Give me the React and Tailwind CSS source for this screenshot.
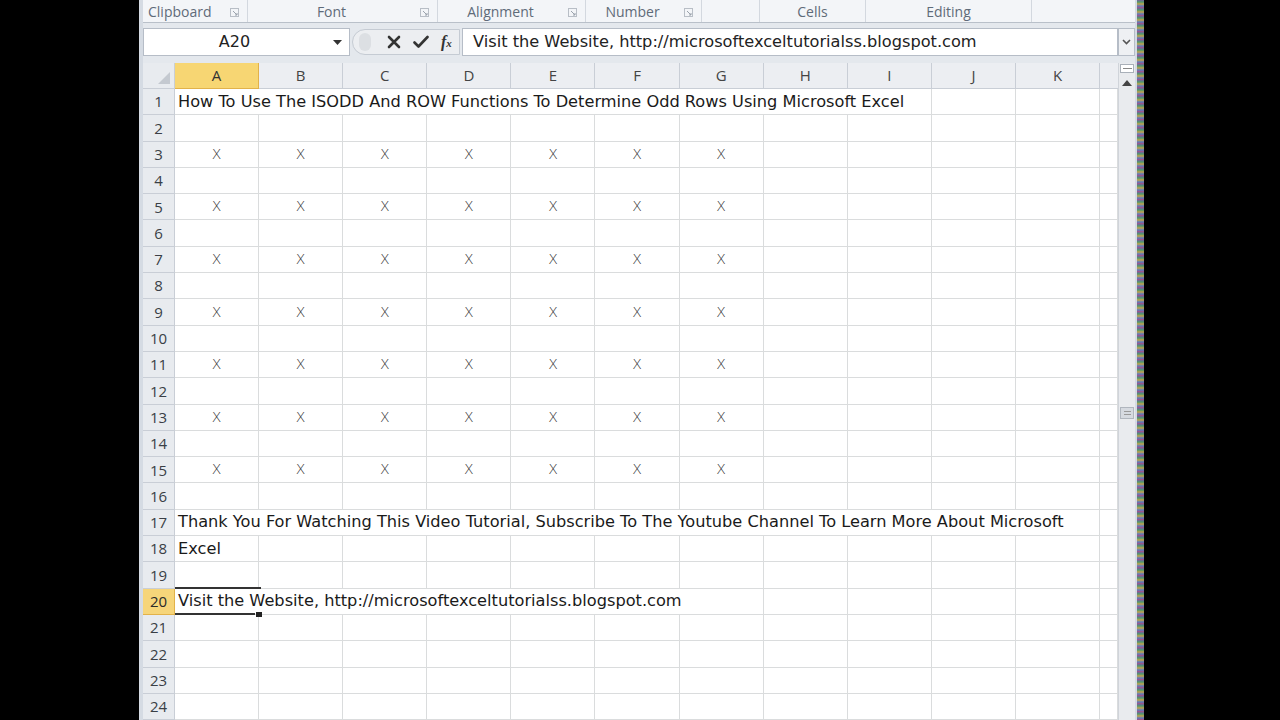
import React from "react";

const cols = ["A", "B", "C", "D", "E", "F", "G", "H", "I", "J", "K"];
const gridCols = "grid grid-cols-[32px_repeat(11,84.1px)_18px]";
const cellBorder = "border-r border-b border-[#dadcdd]";
const cellFont = { fontFamily: '"DejaVu Sans", sans-serif' };

function Cell({ children, span = 1, center }) {
  const spanClass =
    span === 7 ? "col-span-7" : span === 9 ? "col-span-9" : span === 11 ? "col-span-11" : "";
  return (
    <div
      className={`${spanClass} ${cellBorder} h-[26.3px] flex items-center ${
        center ? "justify-center" : "pl-[3px]"
      } whitespace-nowrap overflow-hidden text-[16.2px] text-[#1a1a1a]`}
      style={cellFont}
    >
      {children}
    </div>
  );
}

function RowHead({ n, active }) {
  return (
    <div
      className={`h-[26.3px] flex items-center justify-center border-r border-b text-[15px] ${
        active
          ? "bg-[#f6d57a] border-[#e2b24a] text-[#2a2a2a]"
          : "bg-[#e8ebef] border-[#c9ced6] text-[#3a3f46]"
      }`}
    >
      {n}
    </div>
  );
}

function Row({ n }) {
  const odd = n >= 3 && n <= 15 && n % 2 === 1;
  let content;
  if (n === 1) {
    content = (
      <>
        <Cell span={9}>How To Use The ISODD And ROW Functions To Determine Odd Rows Using Microsoft Excel</Cell>
        <Cell />
        <Cell />
      </>
    );
  } else if (n === 17) {
    content = (
      <Cell span={11}>
        Thank You For Watching This Video Tutorial, Subscribe To The Youtube Channel To Learn More About Microsoft
      </Cell>
    );
  } else if (n === 20) {
    content = (
      <>
        <div
          className={`col-span-7 ${cellBorder} h-[26.3px] relative flex items-center pl-[3px] whitespace-nowrap text-[16.2px] text-[#1a1a1a]`}
          style={cellFont}
        >
          Visit the Website, http://microsoftexceltutorialss.blogspot.com
          <div className="absolute left-0 top-[-2px] w-[86px] h-[2px] bg-[#333]" />
          <div className="absolute left-0 bottom-[-1px] w-[80px] h-[2px] bg-[#333]" />
          <div className="absolute left-[81px] bottom-[-3px] w-[6px] h-[5px] bg-[#222]" />
        </div>
        <Cell />
        <Cell />
        <Cell />
        <Cell />
      </>
    );
  } else if (n === 18) {
    content = cols.map((c, i) => <Cell key={c}>{i === 0 ? "Excel" : null}</Cell>);
  } else {
    content = cols.map((c, i) => (
      <Cell key={c} center={odd && i < 7}>
        {odd && i < 7 ? <span className="font-light text-[14px] text-[#333]">X</span> : null}
      </Cell>
    ));
  }
  return (
    <div className={gridCols}>
      <RowHead n={n} active={n === 20} />
      {content}
      <div className={`${cellBorder} h-[26.3px]`} />
    </div>
  );
}

function Launcher() {
  return (
    <svg width="9" height="9" viewBox="0 0 9 9" className="absolute right-[8px] top-[8px]">
      <rect x="0.5" y="0.5" width="8" height="8" fill="none" stroke="#b8bec6" />
      <path d="M3 3 L7 7 M5 7 H7 V5" stroke="#9aa2ac" fill="none" />
    </svg>
  );
}

function GroupLabel({ w, label, launcher }) {
  return (
    <div className={`${w} h-full flex items-center border-r border-[#d3d8df] relative`}>
      <span className={`flex-1 text-center text-[14px] text-[#5f6b79] ${launcher ? "pr-[22px]" : ""}`}>
        {label}
      </span>
      {launcher && <Launcher />}
    </div>
  );
}

export default function App() {
  return (
    <div
      className="w-[1280px] h-[720px] bg-black flex overflow-hidden"
      style={{ fontFamily: '"Open Sans", "Liberation Sans", sans-serif' }}
    >
      <div className="w-[139px] shrink-0" />
      <div className="w-[998px] shrink-0 flex flex-col bg-[#e4e8ed] border-l-[4px] border-r-[2px] border-[#d5dbe3]">
        {/* ribbon group labels */}
        <div className="h-[23px] shrink-0 flex bg-[#f3f5f8] border-b border-[#b9c0c9]">
          <div className="w-[105px] h-full flex items-center border-r border-[#d3d8df] relative">
            <span className="pl-[5px] text-[14px] text-[#5f6b79]">Clipboard</span>
            <Launcher />
          </div>
          <GroupLabel w="w-[190px]" label="Font" launcher />
          <GroupLabel w="w-[148px]" label="Alignment" launcher />
          <GroupLabel w="w-[116px]" label="Number" launcher />
          <div className="w-[58px] h-full border-r border-[#d3d8df]" />
          <GroupLabel w="w-[106px]" label="Cells" />
          <GroupLabel w="w-[166px]" label="Editing" />
          <div className="flex-1" />
        </div>
        {/* formula bar */}
        <div className="h-[34px] shrink-0 flex items-end pb-[1px] bg-[#e4e8ed]">
          <div className="h-[28px] w-[207px] bg-white border border-[#b6bdc7] flex items-center relative">
            <span className="flex-1 text-center text-[16px] text-[#222] pr-[24px]" style={cellFont}>
              A20
            </span>
            <svg width="9" height="6" viewBox="0 0 9 6" className="absolute right-[7px] top-[11px]">
              <path d="M0 0 H9 L4.5 5 Z" fill="#333" />
            </svg>
          </div>
          <div className="h-[28px] w-[112px] flex items-center relative">
            <div className="ml-[2px] h-[26px] w-[108px] rounded-l-[13px] bg-[#eceef1] border border-[#c5cbd3] flex items-center">
              <div className="ml-[6px] w-[12px] h-[18px] rounded-full bg-[#dcdfe3]" />
              <svg width="14" height="14" viewBox="0 0 14 14" className="ml-[16px]">
                <path d="M2 2 L12 12 M12 2 L2 12" stroke="#333" strokeWidth="2.6" strokeLinecap="round" />
              </svg>
              <svg width="16" height="14" viewBox="0 0 16 14" className="ml-[12px]">
                <path
                  d="M1.5 7.5 L5.5 11.5 L14.5 2"
                  stroke="#333"
                  strokeWidth="2.6"
                  fill="none"
                  strokeLinecap="round"
                  strokeLinejoin="round"
                />
              </svg>
              <span
                className="ml-[12px] text-[16px] italic font-semibold text-[#333]"
                style={{ fontFamily: '"Liberation Serif", serif' }}
              >
                f<span className="text-[11px]">x</span>
              </span>
            </div>
          </div>
          <div
            className="h-[28px] flex-1 bg-white border border-[#b6bdc7] flex items-center pl-[10px] text-[16.2px] text-[#222]"
            style={cellFont}
          >
            Visit the Website, http://microsoftexceltutorialss.blogspot.com
          </div>
          <div className="h-[28px] w-[17px] bg-[#eef0f3] border border-[#b6bdc7] flex items-center justify-center">
            <svg width="9" height="6" viewBox="0 0 9 6">
              <path d="M1 1 L4.5 4.5 L8 1" stroke="#555" strokeWidth="1.6" fill="none" />
            </svg>
          </div>
        </div>
        <div className="h-[6px] shrink-0 bg-[#e4e8ed]" />
        {/* sheet */}
        <div className="flex flex-1 bg-white">
          <div className="flex flex-col">
            <div className={gridCols}>
              <div className="h-[26px] bg-[#e8ebef] border-r border-b border-[#c9ced6] relative">
                <svg width="12" height="12" viewBox="0 0 12 12" className="absolute right-[4px] bottom-[4px]">
                  <path d="M12 0 L12 12 L0 12 Z" fill="#c4c9d0" />
                </svg>
              </div>
              {cols.map((c) => (
                <div
                  key={c}
                  className={`h-[26px] flex items-center justify-center border-r border-b text-[15px] ${
                    c === "A"
                      ? "bg-[#f7d673] border-[#e2b24a] text-[#333]"
                      : "bg-[#eceef2] border-[#c9ced6] text-[#444]"
                  }`}
                >
                  {c}
                </div>
              ))}
              <div className="h-[26px] bg-[#eceef2] border-b border-[#c9ced6]" />
            </div>
            {Array.from({ length: 24 }, (_, i) => (
              <Row key={i} n={i + 1} />
            ))}
          </div>
          {/* vertical scrollbar */}
          <div className="w-[17px] flex flex-col bg-[#e9ebee] border-l border-[#d0d4da]">
            <div className="h-[9px] mx-[1px] mt-[1px] bg-white border border-[#a9b0b9] flex items-center justify-center">
              <div className="w-[9px] h-[1px] bg-[#888]" />
            </div>
            <div className="h-[20px] flex items-center justify-center">
              <svg width="10" height="6" viewBox="0 0 10 6">
                <path d="M0 6 L5 0 L10 6 Z" fill="#444" />
              </svg>
            </div>
            <div className="flex-1 relative">
              <div className="absolute left-[1px] right-[1px] top-[314px] h-[12px] bg-[#d6dae0] border border-[#b0b6be] flex flex-col items-center justify-center gap-[2px]">
                <div className="w-[7px] h-[1px] bg-[#999]" />
                <div className="w-[7px] h-[1px] bg-[#999]" />
              </div>
            </div>
          </div>
        </div>
      </div>
      <div className="w-[7px] shrink-0 bg-[repeating-linear-gradient(180deg,#7a5e9c_0px,#4c9a6e_2px,#c4a24a_4px,#5a7cc0_6px,#b04a7a_8px)]" />
    </div>
  );
}
